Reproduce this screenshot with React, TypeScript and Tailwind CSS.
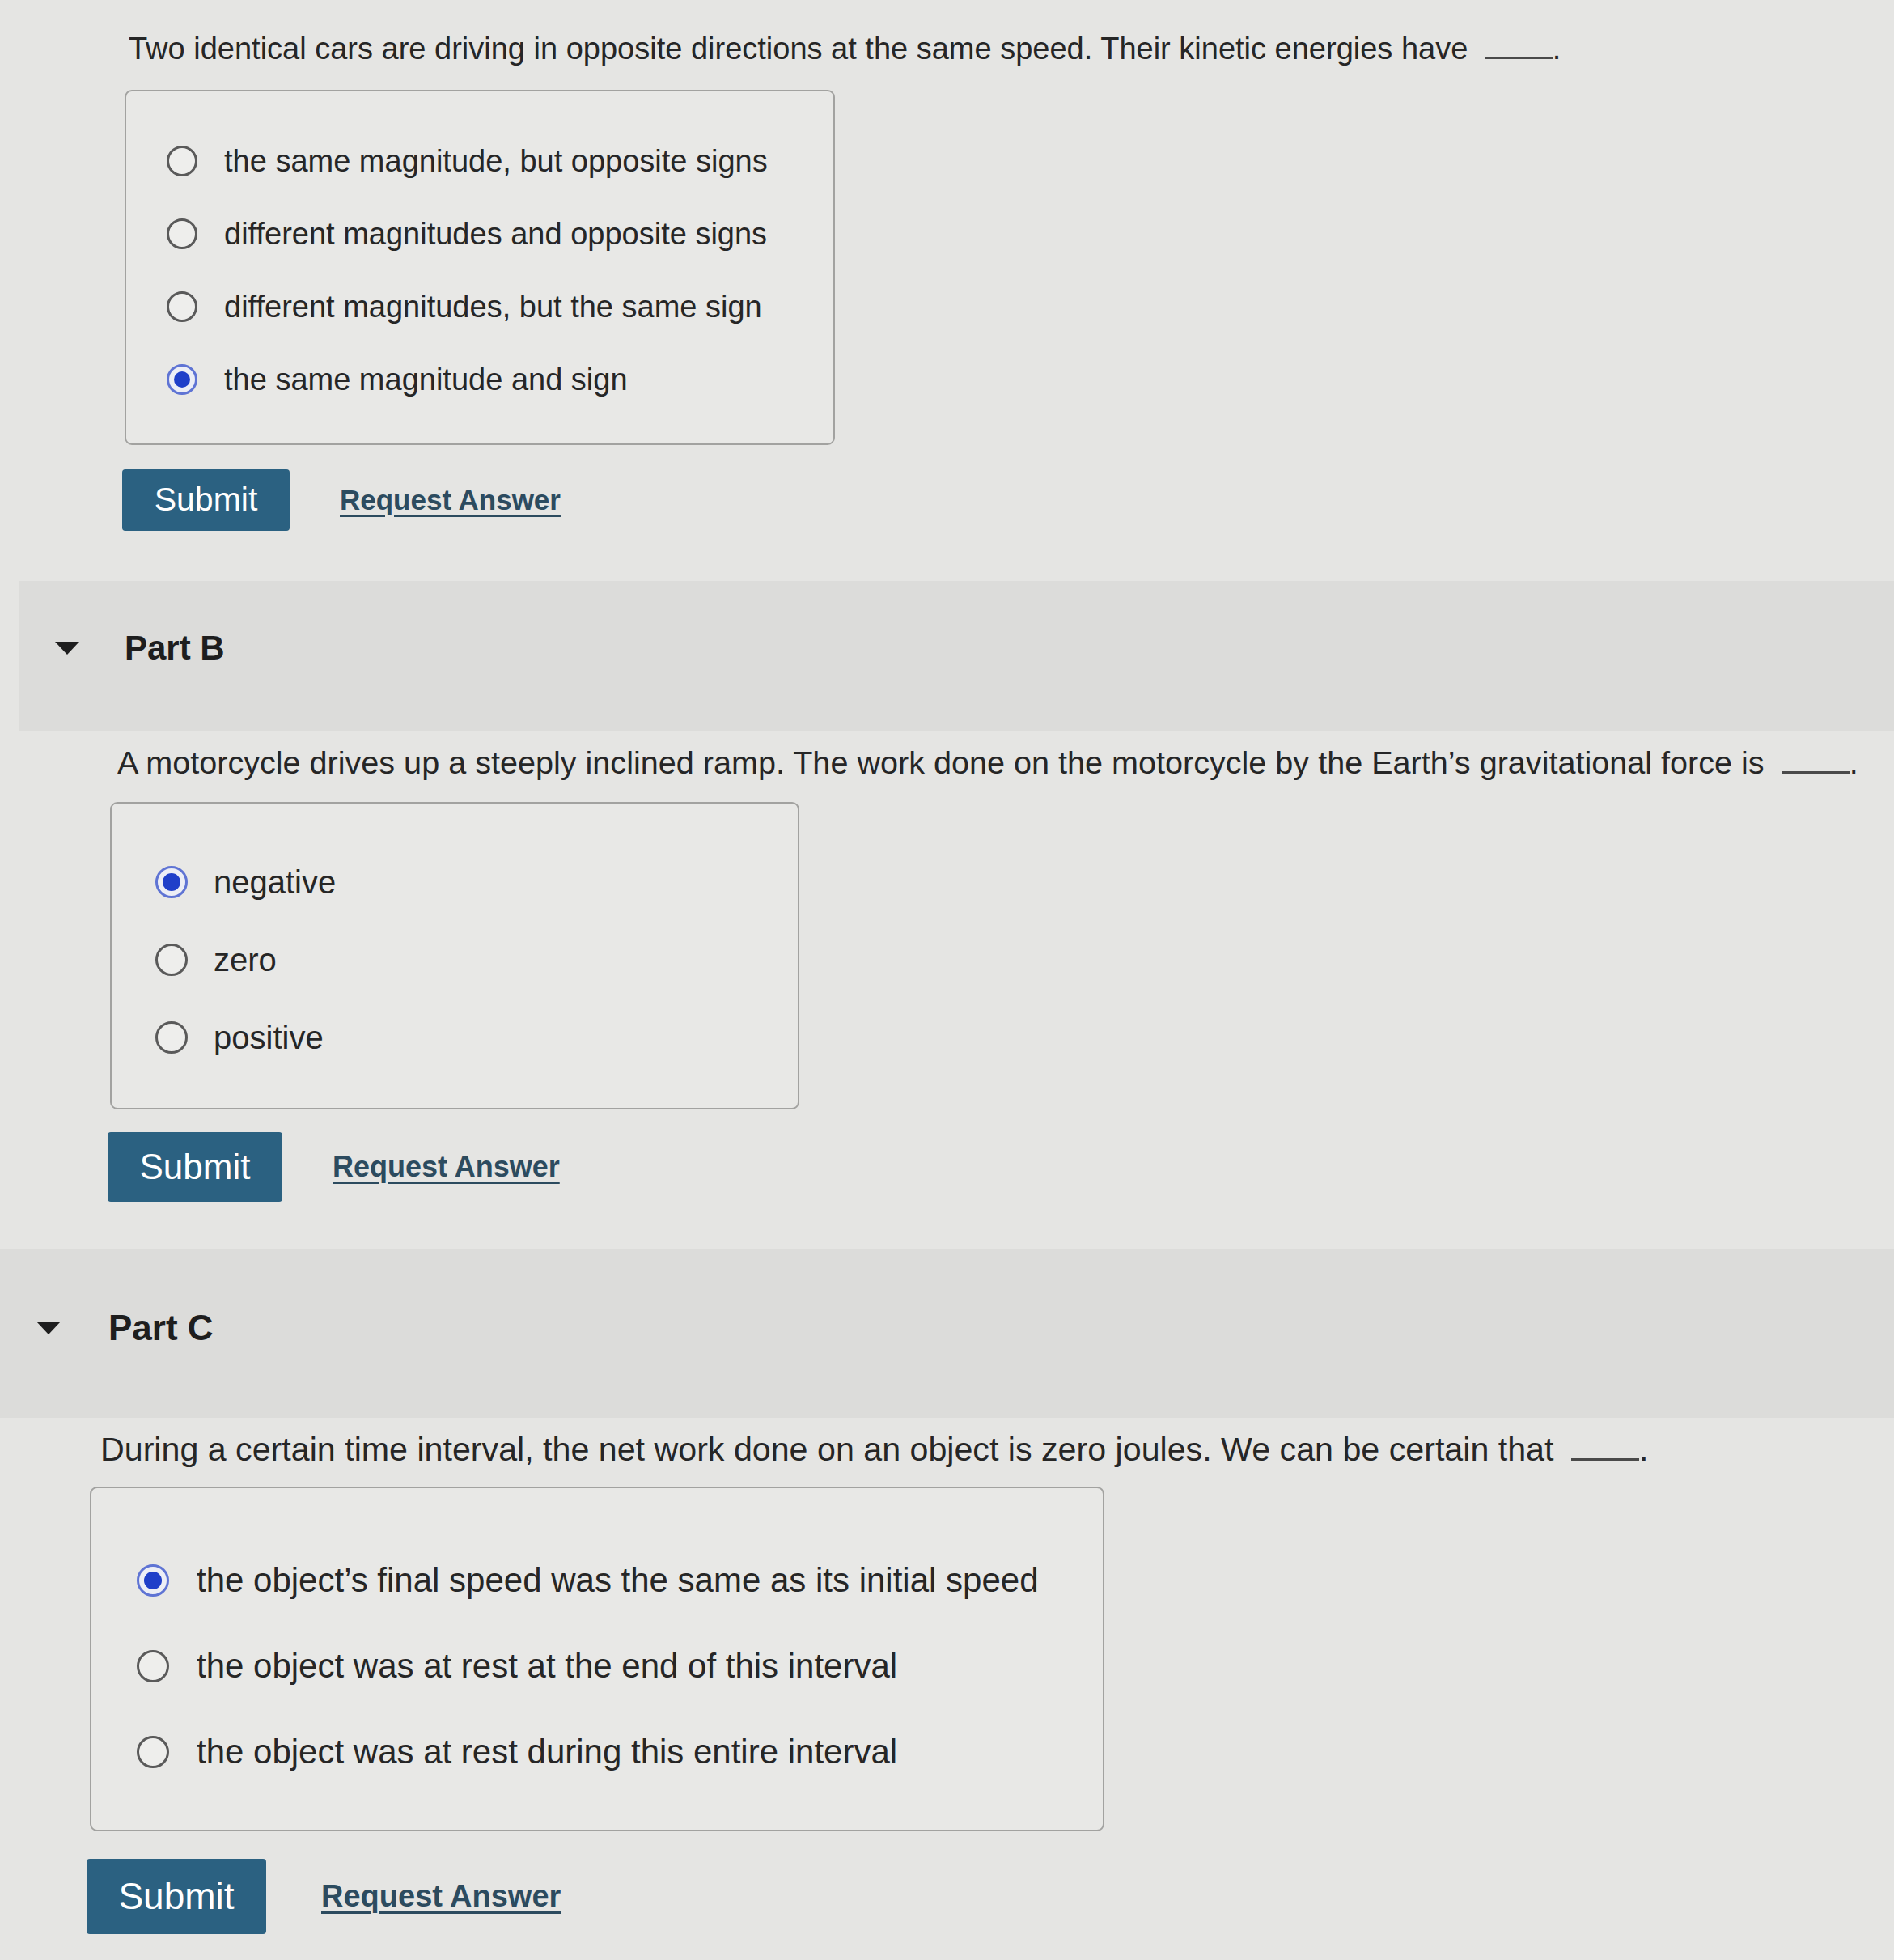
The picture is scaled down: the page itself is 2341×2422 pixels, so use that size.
import React from "react";

type Opt = { label: string; checked?: boolean };

function Radio({ checked, size }: { checked?: boolean; size: string }) {
  if (checked) {
    return (
      <span className={`${size} shrink-0 rounded-full border-[3px] border-[#5f74d4] bg-[#eceef6] flex items-center justify-center`}>
        <span className="w-[62%] h-[62%] rounded-full bg-[#1f3fc9]" />
      </span>
    );
  }
  return <span className={`${size} shrink-0 rounded-full border-[3px] border-[#5a5a5a] bg-[#eeeeec]`} />;
}

function Blank() {
  return (
    <>
      <span className="inline-block w-[84px] h-[3px] bg-[#4a4a4a] align-baseline ml-[10px]" />.
    </>
  );
}

function Triangle({ cls }: { cls: string }) {
  return (
    <svg className={cls} viewBox="0 0 30 16">
      <polygon points="0,0 30,0 15,16" fill="#1e1e1e" />
    </svg>
  );
}

export default function App() {
  const font = { fontFamily: '"Liberation Sans", Arial, sans-serif' };
  const optsA: Opt[] = [
    { label: "the same magnitude, but opposite signs" },
    { label: "different magnitudes and opposite signs" },
    { label: "different magnitudes, but the same sign" },
    { label: "the same magnitude and sign", checked: true },
  ];
  const optsB: Opt[] = [{ label: "negative", checked: true }, { label: "zero" }, { label: "positive" }];
  const optsC: Opt[] = [
    { label: "the object\u2019s final speed was the same as its initial speed", checked: true },
    { label: "the object was at rest at the end of this interval" },
    { label: "the object was at rest during this entire interval" },
  ];

  return (
    <div className="w-[2341px] h-[2422px] bg-[#e5e5e3] text-[#262626] overflow-hidden" style={font}>
      {/* Part A */}
      <div className="pl-[159px] pt-[38px]">
        <p className="text-[38px] leading-[44px] h-[44px] whitespace-nowrap">
          Two identical cars are driving in opposite directions at the same speed. Their kinetic energies have <Blank />
        </p>
      </div>
      <div className="ml-[154px] mt-[29px] w-[878px] h-[439px] border-2 border-[#a2a2a0] rounded-[9px] bg-[#e8e8e6] pt-[41px] pl-[50px]">
        {optsA.map((o) => (
          <div key={o.label} className="h-[90px] flex items-center">
            <Radio checked={o.checked} size="w-[38px] h-[38px]" />
            <span className="ml-[33px] text-[38px] leading-[44px]">{o.label}</span>
          </div>
        ))}
      </div>
      <div className="ml-[151px] mt-[30px] flex items-center">
        <button className="w-[207px] h-[76px] rounded-[4px] bg-[#2b6181] text-white text-[41px] flex items-center justify-center">
          Submit
        </button>
        <span className="ml-[62px] text-[35px] font-bold text-[#2c4b5f] underline underline-offset-[6px] decoration-[3px]">
          Request Answer
        </span>
      </div>

      {/* Part B */}
      <div className="mt-[62px] ml-[23px] h-[185px] bg-[#dcdcda] pt-[58px] flex items-start">
        <div className="h-[50px] flex items-center">
          <Triangle cls="ml-[45px] w-[30px] h-[16px]" />
          <span className="ml-[56px] text-[42px] leading-[50px] font-bold text-[#1e1e1e]">Part B</span>
        </div>
      </div>
      <div className="pl-[145px] mt-[16px]">
        <p className="text-[39.6px] leading-[46px] h-[46px] whitespace-nowrap">
          A motorcycle drives up a steeply inclined ramp. The work done on the motorcycle by the Earth{"\u2019"}s gravitational force is <Blank />
        </p>
      </div>
      <div className="ml-[136px] mt-[26px] w-[852px] h-[380px] border-2 border-[#a2a2a0] rounded-[9px] bg-[#e8e8e6] pt-[49px] pl-[54px]">
        {optsB.map((o) => (
          <div key={o.label} className="h-[96px] flex items-center">
            <Radio checked={o.checked} size="w-[40px] h-[40px]" />
            <span className="ml-[32px] text-[40px] leading-[48px]">{o.label}</span>
          </div>
        ))}
      </div>
      <div className="ml-[133px] mt-[28px] flex items-center">
        <button className="w-[216px] h-[86px] rounded-[4px] bg-[#2b6181] text-white text-[44px] flex items-center justify-center">
          Submit
        </button>
        <span className="ml-[62px] text-[36px] font-bold text-[#2c4b5f] underline underline-offset-[6px] decoration-[3px]">
          Request Answer
        </span>
      </div>

      {/* Part C */}
      <div className="mt-[59px] h-[208px] bg-[#dcdcda] pt-[71px] flex items-start">
        <div className="h-[52px] flex items-center">
          <Triangle cls="ml-[45px] w-[30px] h-[16px]" />
          <span className="ml-[59px] text-[44px] leading-[52px] font-bold text-[#1e1e1e]">Part C</span>
        </div>
      </div>
      <div className="pl-[124px] mt-[15px]">
        <p className="text-[41.2px] leading-[48px] h-[48px] whitespace-nowrap">
          During a certain time interval, the net work done on an object is zero joules. We can be certain that <Blank />
        </p>
      </div>
      <div className="ml-[111px] mt-[22px] w-[1254px] h-[426px] border-2 border-[#a2a2a0] rounded-[9px] bg-[#e8e8e6] pt-[61px] pl-[56px]">
        {optsC.map((o) => (
          <div key={o.label} className="h-[106px] flex items-center">
            <Radio checked={o.checked} size="w-[40px] h-[40px]" />
            <span className="ml-[34px] text-[42px] leading-[50px]">{o.label}</span>
          </div>
        ))}
      </div>
      <div className="ml-[107px] mt-[34px] flex items-center">
        <button className="w-[222px] h-[93px] rounded-[4px] bg-[#2b6181] text-white text-[46px] flex items-center justify-center">
          Submit
        </button>
        <span className="ml-[68px] text-[38px] font-bold text-[#2c4b5f] underline underline-offset-[6px] decoration-[3px]">
          Request Answer
        </span>
      </div>
    </div>
  );
}
